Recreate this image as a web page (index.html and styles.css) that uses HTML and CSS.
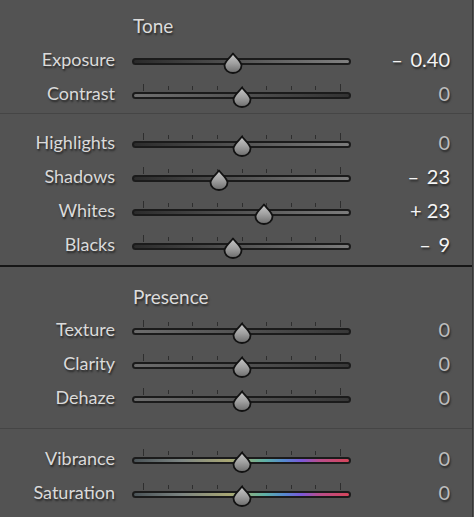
FILE: index.html
```html
<!DOCTYPE html>
<html>
<head>
<meta charset="utf-8">
<link rel="stylesheet" href="styles.css">
</head>
<body>
<svg class="defs" width="0" height="0" aria-hidden="true">
  <defs>
    <linearGradient id="thumbFill" x1="0" y1="0" x2="0" y2="1">
      <stop offset="0" stop-color="#c8c8c8"/>
      <stop offset="0.5" stop-color="#a0a0a0"/>
      <stop offset="1" stop-color="#6c6c6c"/>
    </linearGradient>
    <symbol id="thumb" viewBox="0 0 20 22">
      <path d="M10 1.5 C11.6 4.2 18.5 9.2 18.5 13.6 A8.5 7.4 0 0 1 1.5 13.6 C1.5 9.2 8.4 4.2 10 1.5 Z" fill="url(#thumbFill)" stroke="#121212" stroke-width="1.8" stroke-linejoin="round"/>
    </symbol>
  </defs>
</svg>
<div class="panel">
  <section class="group group-tone">
    <h2 class="heading">Tone</h2>
    <div class="row">
      <span class="label">Exposure</span>
      <div class="slider">
        <div class="ticks"></div>
        <div class="track tr-exposure"></div>
        <svg class="thumb" style="left:91px"><use href="#thumb"/></svg>
      </div>
      <span class="value strong">–&#8201; 0.40</span>
    </div>
    <div class="row">
      <span class="label">Contrast</span>
      <div class="slider">
        <div class="ticks"><i class="end"></i><i></i><i></i><i></i><i></i><i></i><i></i><i></i><i class="end"></i></div>
        <div class="track tr-contrast"></div>
        <svg class="thumb" style="left:100px"><use href="#thumb"/></svg>
      </div>
      <span class="value">0</span>
    </div>
  </section>

  <section class="group group-light">
    <div class="row">
      <span class="label">Highlights</span>
      <div class="slider">
        <div class="ticks"><i class="end"></i><i></i><i></i><i></i><i></i><i></i><i></i><i></i><i class="end"></i></div>
        <div class="track tr-ramp"></div>
        <svg class="thumb" style="left:100px"><use href="#thumb"/></svg>
      </div>
      <span class="value">0</span>
    </div>
    <div class="row">
      <span class="label">Shadows</span>
      <div class="slider">
        <div class="ticks"><i class="end"></i><i></i><i></i><i></i><i></i><i></i><i></i><i></i><i class="end"></i></div>
        <div class="track tr-ramp"></div>
        <svg class="thumb" style="left:76.5px"><use href="#thumb"/></svg>
      </div>
      <span class="value strong">–&#8201; 23</span>
    </div>
    <div class="row">
      <span class="label">Whites</span>
      <div class="slider">
        <div class="ticks"><i class="end"></i><i></i><i></i><i></i><i></i><i></i><i></i><i></i><i class="end"></i></div>
        <div class="track tr-ramp"></div>
        <svg class="thumb" style="left:122px"><use href="#thumb"/></svg>
      </div>
      <span class="value strong">+ 23</span>
    </div>
    <div class="row">
      <span class="label">Blacks</span>
      <div class="slider">
        <div class="ticks"><i class="end"></i><i></i><i></i><i></i><i></i><i></i><i></i><i></i><i class="end"></i></div>
        <div class="track tr-ramp"></div>
        <svg class="thumb" style="left:91px"><use href="#thumb"/></svg>
      </div>
      <span class="value strong">–&#8201; 9</span>
    </div>
  </section>

  <section class="group group-presence">
    <h2 class="heading">Presence</h2>
    <div class="row">
      <span class="label">Texture</span>
      <div class="slider">
        <div class="ticks"><i class="end"></i><i></i><i></i><i></i><i></i><i></i><i></i><i></i><i class="end"></i></div>
        <div class="track tr-flat"></div>
        <svg class="thumb" style="left:100px"><use href="#thumb"/></svg>
      </div>
      <span class="value">0</span>
    </div>
    <div class="row">
      <span class="label">Clarity</span>
      <div class="slider">
        <div class="ticks"><i class="end"></i><i></i><i></i><i></i><i></i><i></i><i></i><i></i><i class="end"></i></div>
        <div class="track tr-flat"></div>
        <svg class="thumb" style="left:100px"><use href="#thumb"/></svg>
      </div>
      <span class="value">0</span>
    </div>
    <div class="row">
      <span class="label">Dehaze</span>
      <div class="slider">
        <div class="ticks"><i class="end"></i><i></i><i></i><i></i><i></i><i></i><i></i><i></i><i class="end"></i></div>
        <div class="track tr-flat"></div>
        <svg class="thumb" style="left:100px"><use href="#thumb"/></svg>
      </div>
      <span class="value">0</span>
    </div>
  </section>

  <section class="group group-color">
    <div class="row">
      <span class="label">Vibrance</span>
      <div class="slider">
        <div class="ticks"><i class="end"></i><i></i><i></i><i></i><i></i><i></i><i></i><i></i><i class="end"></i></div>
        <div class="track tr-color"></div>
        <svg class="thumb" style="left:100px"><use href="#thumb"/></svg>
      </div>
      <span class="value">0</span>
    </div>
    <div class="row">
      <span class="label">Saturation</span>
      <div class="slider">
        <div class="ticks"><i class="end"></i><i></i><i></i><i></i><i></i><i></i><i></i><i></i><i class="end"></i></div>
        <div class="track tr-color"></div>
        <svg class="thumb" style="left:100px"><use href="#thumb"/></svg>
      </div>
      <span class="value">0</span>
    </div>
  </section>
</div>
</body>
</html>
```

FILE: styles.css
```css
* {
  box-sizing: border-box;
  margin: 0;
  padding: 0;
}

html,
body {
  background: #535353;
}

body {
  width: 474px;
  height: 517px;
  overflow: hidden;
  font-family: Lato, "Open Sans", "DejaVu Sans", sans-serif;
}

.defs {
  position: absolute;
  width: 0;
  height: 0;
  overflow: hidden;
}

.panel {
  width: 473px;
  height: 517px;
  border-right: 1px solid #383838;
  background: #535353;
}

.group-tone {
  padding-bottom: 2px;
  border-bottom: 1px solid #454545;
}

.group-light {
  padding-top: 12px;
  padding-bottom: 3px;
  border-bottom: 2px solid #161616;
}

.group-presence {
  padding-bottom: 13px;
  border-bottom: 1px solid #454545;
}

.group-color {
  padding-top: 13px;
}

.heading {
  font-size: 19px;
  font-weight: 400;
  line-height: 22px;
  color: #dcdcdc;
  padding-left: 133px;
  text-shadow: 1px 2px 2px rgba(0, 0, 0, 0.5);
}

.group-tone .heading {
  padding-top: 15px;
  padding-bottom: 6px;
}

.group-presence .heading {
  padding-top: 19px;
  padding-bottom: 5px;
}

.row {
  display: grid;
  grid-template-columns: 115px 219px 1fr;
  column-gap: 17px;
  height: 34px;
}

.label {
  font-size: 18px;
  line-height: 33px;
  text-align: right;
  color: #dadada;
  white-space: nowrap;
  text-shadow: 1px 2px 2px rgba(0, 0, 0, 0.55);
}

.value {
  font-size: 20px;
  line-height: 33px;
  text-align: right;
  padding-right: 22px;
  color: #bdbdbd;
  white-space: pre;
  text-shadow: 1px 2px 2px rgba(0, 0, 0, 0.55);
}

.value.strong {
  color: #f4f4f4;
}

.slider {
  position: relative;
  height: 34px;
  padding-top: 7px;
}

.ticks {
  display: flex;
  justify-content: space-between;
  align-items: flex-start;
  height: 8px;
  padding: 0 10px 0 11px;
}

.ticks i {
  display: block;
  width: 1px;
  height: 4px;
  margin-top: 2px;
  background: #2e2e2e;
}

.ticks i.end {
  height: 7px;
  margin-top: 0;
}

.track {
  height: 7px;
  border: 2px solid #1b1b1b;
  border-radius: 4px;
}

.tr-exposure {
  background: linear-gradient(to right, #2a2a2a, #808080);
}

.tr-contrast {
  background: linear-gradient(to right, #707070, #323232);
}

.tr-ramp {
  background: linear-gradient(to right, #2c2c2c, #7c7c7c);
}

.tr-flat {
  background: linear-gradient(to right, #6c6c6c, #383838);
}

.tr-color {
  background: linear-gradient(to right, #4b5458 0%, #7c8482 22%, #a8a674 44%, #84ae86 54%, #5eb0a6 61%, #5688d0 70%, #7c58d8 78%, #b84e8c 86%, #d6465a 100%);
}

.thumb {
  position: absolute;
  top: 9px;
  width: 20px;
  height: 22px;
  overflow: visible;
}
```
